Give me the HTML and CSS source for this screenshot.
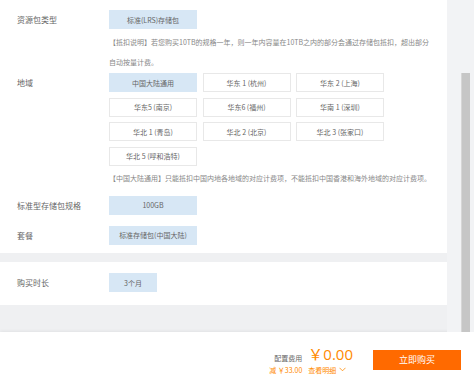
FILE: index.html
```html
<!DOCTYPE html>
<html lang="zh-CN">
<head>
    <meta charset="UTF-8">
    <title>存储包购买</title>
    <link rel="stylesheet" href="styles.css">
</head>
<body>
    <div class="page">
        <div class="top">
            <div class="main">
                <div class="card card-first">
                    <div class="row">
                        <div class="label">资源包类型</div>
                        <div class="field">
                            <div class="opts">
                                <div class="opt selected">标准(LRS)存储包</div>
                            </div>
                            <p class="note">【抵扣说明】若您购买10TB的规格一年，则一年内容量在10TB之内的部分会通过存储包抵扣，超出部分自动按量计费。</p>
                        </div>
                    </div>
                    <div class="row row-region">
                        <div class="label">地域</div>
                        <div class="field">
                            <div class="opts grid">
                                <div class="opt selected">中国大陆通用</div>
                                <div class="opt">华东 1 (杭州)</div>
                                <div class="opt">华东 2 (上海)</div>
                                <div class="opt">华东5 (南京)</div>
                                <div class="opt">华东6 (福州)</div>
                                <div class="opt">华南 1 (深圳)</div>
                                <div class="opt">华北 1 (青岛)</div>
                                <div class="opt">华北 2 (北京)</div>
                                <div class="opt">华北 3 (张家口)</div>
                                <div class="opt">华北 5 (呼和浩特)</div>
                            </div>
                            <p class="note note-single">【中国大陆通用】只能抵扣中国内地各地域的对应计费项，不能抵扣中国香港和海外地域的对应计费项。</p>
                        </div>
                    </div>
                    <div class="row row-spec">
                        <div class="label">标准型存储包规格</div>
                        <div class="field">
                            <div class="opt selected">100GB</div>
                        </div>
                    </div>
                    <div class="row row-pack">
                        <div class="label">套餐</div>
                        <div class="field">
                            <div class="opt selected">标准存储包(中国大陆)</div>
                        </div>
                    </div>
                </div>
                <div class="card card-second">
                    <div class="row">
                        <div class="label">购买时长</div>
                        <div class="field">
                            <div class="opt selected opt-small">3个月</div>
                        </div>
                    </div>
                </div>
            </div>
            <div class="side">
                <div class="thumb"></div>
            </div>
        </div>
        <div class="footer">
            <div class="price-info">
                <div class="price-left">
                    <span class="cost-label">配置费用</span>
                    <span class="discount">减 ￥33.00</span>
                </div>
                <div class="price-right">
                    <span class="total">￥0.00</span>
                    <span class="detail">查看明细
                        <svg width="7" height="5" viewBox="0 0 7 5"><path d="M0.5 0.8 L3.5 3.8 L6.5 0.8" fill="none" stroke="#ff8a00" stroke-width="0.8"/></svg>
                    </span>
                </div>
            </div>
            <button class="buy">立即购买</button>
        </div>
    </div>
</body>
</html>
```

FILE: styles.css
```css
* {
    box-sizing: border-box;
}
body {
    margin: 0;
    font-family: "Noto Sans CJK SC", "Noto Sans", sans-serif;
    color: #555;
    background: #fff;
}
.page {
    width: 474px;
    height: 384px;
    display: flex;
    flex-direction: column;
    overflow: hidden;
}
.top {
    display: flex;
    height: 332px;
}
.main {
    width: 447px;
    background: #eff0f2;
    display: flex;
    flex-direction: column;
    gap: 9px;
}
.side {
    flex: 1;
    background: #f2f3f5;
    position: relative;
}
.thumb {
    position: absolute;
    left: 14px;
    top: 73px;
    width: 9px;
    height: 259px;
    background: #c6c6c6;
    border-left: 1px solid #d6d6d6;
}
.card {
    background: #fff;
}
.card-first {
    padding: 10px 0 9px;
    height: 253px;
}
.card-second {
    padding: 11px 0 13px;
}
.row {
    display: flex;
}
.label {
    width: 109px;
    padding-left: 17px;
    font-size: 8px;
    line-height: 19px;
    color: #666;
}
.field {
    flex: 1;
}
.opts {
    display: flex;
}
.grid {
    display: grid;
    grid-template-columns: repeat(3, 88px);
    column-gap: 5.5px;
    row-gap: 5.5px;
}
.opt {
    width: 88px;
    height: 19px;
    border: 1px solid #e8e8e8;
    background: #fff;
    font-size: 7px;
    color: #666;
    display: flex;
    align-items: center;
    justify-content: center;
}
.opt.selected {
    background: #d7e7f5;
    border-color: #d7e7f5;
}
.opt-small {
    width: 48px;
}
.note {
    margin: 3px 0 0;
    width: 325px;
    font-size: 7px;
    line-height: 20px;
    color: #888;
}
.note-single {
    margin-top: 5px;
    line-height: 14px;
    width: auto;
}
.row-region {
    margin-top: 1px;
}
.row-spec {
    margin-top: 11px;
}
.row-pack {
    margin-top: 11px;
}
.footer {
    height: 52px;
    background: #fff;
    box-shadow: 0 -1px 3px rgba(0, 0, 0, 0.06);
    display: flex;
    align-items: center;
    justify-content: flex-end;
    padding-right: 13px;
    padding-top: 3px;
}
.price-info {
    display: flex;
    gap: 6px;
    margin-right: 20px;
}
.price-left {
    display: flex;
    flex-direction: column;
    align-items: flex-end;
    justify-content: flex-end;
    font-size: 7px;
    line-height: 12px;
}
.cost-label {
    color: #666;
}
.discount {
    color: #ff8a00;
}
.price-right {
    display: flex;
    flex-direction: column;
    font-size: 7px;
    line-height: 12px;
}
.total {
    font-family: "Open Sans", sans-serif;
    font-size: 15px;
    line-height: 20px;
    color: #ff8a00;
}
.detail {
    color: #ff8a00;
    display: flex;
    align-items: center;
    gap: 3px;
}
.buy {
    width: 88px;
    height: 20px;
    border: none;
    background: #ff6a00;
    color: #fff;
    font-family: "Noto Sans CJK SC", sans-serif;
    font-size: 9px;
    padding: 0;
}
```
